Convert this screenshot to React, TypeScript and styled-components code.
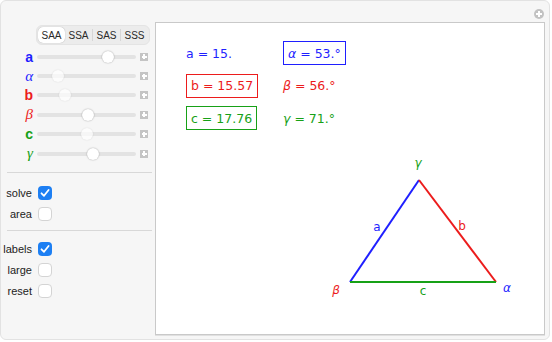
import React from "react";
import styled, { createGlobalStyle, css } from "styled-components";

const BLUE = "#1f1fff";
const RED = "#ec1c1c";
const GREEN = "#17a117";

const GlobalStyle = createGlobalStyle`
   html, body {
      margin: 0;
      padding: 0;
      background: #ffffff;
   }
`;

const Frame = styled.div`
   box-sizing: border-box;
   position: relative;
   width: 550px;
   height: 340px;
   display: flex;
   background: #f6f6f6;
   border: 1px solid #e2e2e2;
   border-radius: 6px;
   font-family: "Liberation Sans", Arial, sans-serif;
`;

const Controls = styled.div`
   width: 154px;
   flex-shrink: 0;
   display: flex;
   flex-direction: column;
   padding-top: 24px;
`;

const Segmented = styled.div`
   align-self: flex-end;
   margin-right: 5px;
   display: flex;
   height: 20px;
   box-sizing: border-box;
   padding: 1px;
   background: #ececec;
   border: 1px solid #e4e4e4;
   border-radius: 6px;
   margin-bottom: 2px;
`;

const Segment = styled.div<{ $active?: boolean }>`
   width: 27px;
   display: flex;
   align-items: center;
   justify-content: center;
   font-size: 10px;
   color: #2a2a2a;
   border-radius: 5px;
   ${({ $active }) =>
      $active &&
      css`
         background: #ffffff;
         box-shadow: 0 0 1px rgba(0, 0, 0, 0.35);
      `}
`;

const SegmentGap = styled.div`
   width: 1px;
   height: 12px;
   align-self: center;
   background: #d6d6d6;
`;

const SliderRow = styled.div`
   height: 19.4px;
   display: flex;
   align-items: center;
`;

const SliderLabel = styled.div<{ $color: string; $greek?: boolean }>`
   width: 32px;
   text-align: right;
   color: ${({ $color }) => $color};
   font-size: ${({ $greek }) => ($greek ? "15px" : "14px")};
   font-weight: ${({ $greek }) => ($greek ? "normal" : "bold")};
   font-style: ${({ $greek }) => ($greek ? "italic" : "normal")};
   font-family: ${({ $greek }) =>
      $greek ? '"Liberation Serif", "DejaVu Serif", serif' : '"Liberation Sans", Arial, sans-serif'};
   line-height: 1;
`;

const Track = styled.div`
   position: relative;
   margin-left: 4px;
   width: 99px;
   height: 4px;
   border-radius: 2px;
   background: #e3e3e3;
`;

const Thumb = styled.div<{ $faded?: boolean }>`
   position: absolute;
   top: 50%;
   width: 12px;
   height: 12px;
   margin: -6px 0 0 -6px;
   border-radius: 50%;
   background: #ffffff;
   box-shadow: 0 0 1.5px rgba(0, 0, 0, ${({ $faded }) => ($faded ? 0.18 : 0.4)});
   opacity: ${({ $faded }) => ($faded ? 0.7 : 1)};
`;

const PlusBox = styled.div`
   margin-left: 4px;
   width: 8px;
   height: 8px;
   background: #c4c4c4;
   position: relative;
   &::before,
   &::after {
      content: "";
      position: absolute;
      background: #ffffff;
   }
   &::before {
      left: 1.5px;
      right: 1.5px;
      top: 3px;
      height: 2px;
   }
   &::after {
      top: 1.5px;
      bottom: 1.5px;
      left: 3px;
      width: 2px;
   }
`;

const Divider = styled.div<{ $top: number; $bottom: number }>`
   margin: ${({ $top, $bottom }) => `${$top}px 3px ${$bottom}px 6px`};
   height: 1px;
   background: #d8d8d8;
`;

const CheckRow = styled.div`
   height: 21px;
   display: flex;
   align-items: center;
`;

const CheckLabel = styled.div`
   width: 31px;
   text-align: right;
   font-size: 11px;
   color: #222;
`;

const Box = styled.div<{ $checked?: boolean }>`
   margin-left: 6px;
   width: 14px;
   height: 14px;
   box-sizing: border-box;
   border-radius: 4px;
   display: flex;
   align-items: center;
   justify-content: center;
   ${({ $checked }) =>
      $checked
         ? css`
              background: #1d7ff3;
           `
         : css`
              background: #ffffff;
              border: 1px solid #d4d4d4;
           `}
`;

const Display = styled.div`
   box-sizing: border-box;
   flex: 1;
   margin: 21px 5px 4px 0;
   background: #ffffff;
   border: 1px solid #c9c9c9;
   box-shadow: 0 1px 0 #e0e0e0;
   display: flex;
   flex-direction: column;
`;

const Values = styled.div`
   display: grid;
   grid-template-columns: 97px auto;
   grid-auto-rows: 32.5px;
   align-items: center;
   justify-items: start;
   padding: 14px 0 0 30px;
   font-family: "DejaVu Sans", Verdana, sans-serif;
   font-size: 12.5px;
`;

const Value = styled.div<{ $color: string; $boxed?: boolean }>`
   color: ${({ $color }) => $color};
   height: 24px;
   box-sizing: border-box;
   display: flex;
   align-items: center;
   white-space: pre;
   ${({ $boxed, $color }) =>
      $boxed &&
      css`
         border: 1.5px solid ${$color};
         padding: 0 4px;
      `}
`;

const Drawing = styled.svg`
   display: block;
   margin-top: 15px;
   font-family: "DejaVu Sans", Verdana, sans-serif;
   font-size: 12px;
`;

const CornerPlus = styled.div`
   position: absolute;
   top: 8px;
   right: 5px;
   width: 10px;
   height: 10px;
   border-radius: 50%;
   background: #c2c2c2;
   &::before,
   &::after {
      content: "";
      position: absolute;
      background: #ffffff;
   }
   &::before {
      left: 2px;
      right: 2px;
      top: 4px;
      height: 2px;
   }
   &::after {
      top: 2px;
      bottom: 2px;
      left: 4px;
      width: 2px;
   }
`;

const sliders = [
   { label: "a", color: BLUE, pos: 0.72, faded: false },
   { label: "α", color: BLUE, pos: 0.21, greek: true, faded: true },
   { label: "b", color: RED, pos: 0.28, faded: true },
   { label: "β", color: RED, pos: 0.52, greek: true, faded: false },
   { label: "c", color: GREEN, pos: 0.51, faded: true },
   { label: "γ", color: GREEN, pos: 0.57, greek: true, faded: false },
];

const Check = () => (
   <svg width="10" height="10" viewBox="0 0 10 10">
      <path d="M1.5 5.3 L4 7.8 L8.6 2" fill="none" stroke="#fff" strokeWidth="1.8" strokeLinecap="round" strokeLinejoin="round" />
   </svg>
);

const Greek = styled.i`
   font-style: italic;
`;

const App: React.FC = () => {
   return (
      <>
         <GlobalStyle />
         <Frame>
            <Controls>
               <Segmented>
                  <Segment $active>SAA</Segment>
                  <Segment>SSA</Segment>
                  <SegmentGap />
                  <Segment>SAS</Segment>
                  <SegmentGap />
                  <Segment>SSS</Segment>
               </Segmented>
               {sliders.map(s => (
                  <SliderRow key={s.label}>
                     <SliderLabel $color={s.color} $greek={s.greek}>
                        {s.label}
                     </SliderLabel>
                     <Track>
                        <Thumb $faded={s.faded} style={{ left: `${s.pos * 100}%` }} />
                     </Track>
                     <PlusBox />
                  </SliderRow>
               ))}
               <Divider $top={9} $bottom={9} />
               <CheckRow>
                  <CheckLabel>solve</CheckLabel>
                  <Box $checked>
                     <Check />
                  </Box>
               </CheckRow>
               <CheckRow>
                  <CheckLabel>area</CheckLabel>
                  <Box />
               </CheckRow>
               <Divider $top={6} $bottom={7} />
               <CheckRow>
                  <CheckLabel>labels</CheckLabel>
                  <Box $checked>
                     <Check />
                  </Box>
               </CheckRow>
               <CheckRow>
                  <CheckLabel>large</CheckLabel>
                  <Box />
               </CheckRow>
               <CheckRow>
                  <CheckLabel>reset</CheckLabel>
                  <Box />
               </CheckRow>
            </Controls>
            <Display>
               <Values>
                  <Value $color={BLUE}>a = 15.</Value>
                  <Value $color={BLUE} $boxed>
                     <Greek>α</Greek> = 53.°
                  </Value>
                  <Value $color={RED} $boxed>
                     b = 15.57
                  </Value>
                  <Value $color={RED}>
                     <Greek>β</Greek> = 56.°
                  </Value>
                  <Value $color={GREEN} $boxed>
                     c = 17.76
                  </Value>
                  <Value $color={GREEN}>
                     <Greek>γ</Greek> = 71.°
                  </Value>
               </Values>
               <Drawing width="388" height="170" viewBox="0 0 388 170">
                  <line x1="194" y1="132" x2="263" y2="30" stroke={BLUE} strokeWidth="2" />
                  <line x1="263" y1="30" x2="340" y2="132" stroke={RED} strokeWidth="2" />
                  <line x1="194" y1="132" x2="340" y2="132" stroke={GREEN} strokeWidth="2" />
                  <text x="262" y="13" fill={GREEN} textAnchor="middle" dominantBaseline="central" fontStyle="italic">
                     γ
                  </text>
                  <text x="180" y="140" fill={RED} textAnchor="middle" dominantBaseline="central" fontStyle="italic">
                     β
                  </text>
                  <text x="351" y="138" fill={BLUE} textAnchor="middle" dominantBaseline="central" fontStyle="italic">
                     α
                  </text>
                  <text x="221" y="77" fill={BLUE} textAnchor="middle" dominantBaseline="central">
                     a
                  </text>
                  <text x="306" y="76" fill={RED} textAnchor="middle" dominantBaseline="central">
                     b
                  </text>
                  <text x="267" y="141" fill={GREEN} textAnchor="middle" dominantBaseline="central">
                     c
                  </text>
               </Drawing>
            </Display>
            <CornerPlus />
         </Frame>
      </>
   );
};

export default App;
